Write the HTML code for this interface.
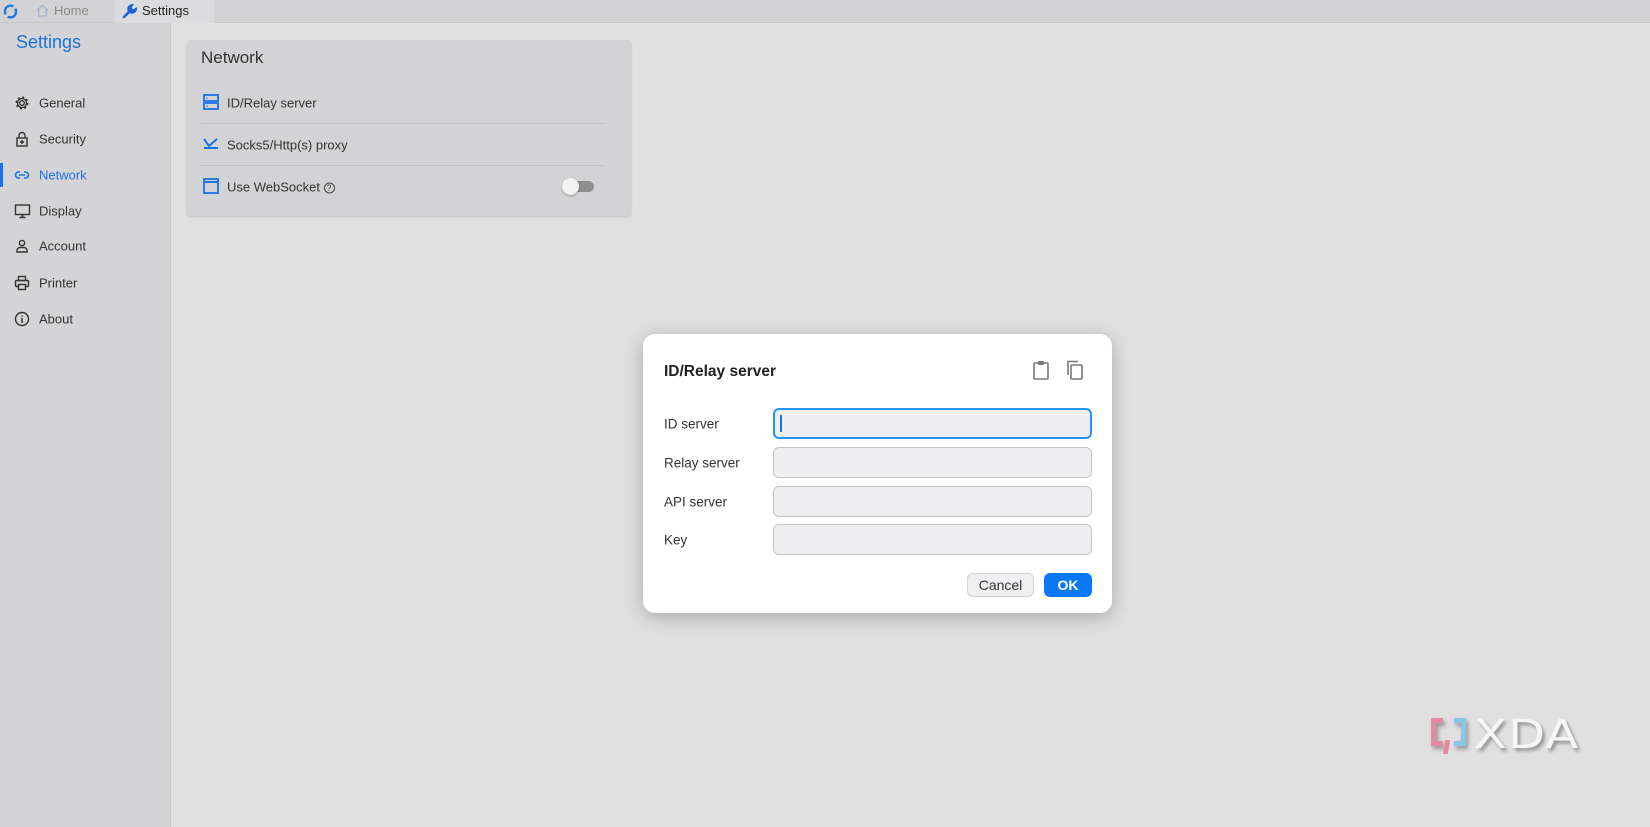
<!DOCTYPE html>
<html><head><meta charset="utf-8"><style>
*{margin:0;padding:0;box-sizing:border-box}
body{width:1650px;height:827px;background:#e0e0e0;font-family:"Liberation Sans",sans-serif;position:relative;overflow:hidden;color:#222}
.abs{position:absolute}
.top{left:0;top:0;width:1650px;height:23px;background:#d3d3d5;border-bottom:1px solid #c8c8c8}
.side{left:0;top:23px;width:171px;height:804px;background:#d4d4d6;border-right:1px solid #c9c9c9}
.item{position:absolute;left:39px;font-size:13px;color:#333;transform:translateY(-50%)}
.ic{position:absolute;left:14px;transform:translateY(-50%)}
.card{left:187px;top:40px;width:444px;height:176px;background:#d3d3d5;border-radius:4px;box-shadow:0 1px 2px rgba(0,0,0,.15)}
.row{position:absolute;left:227px;font-size:13px;color:#333;transform:translateY(-50%)}
.div{position:absolute;left:201px;width:403px;height:1px;background:#c2c2c4}
.dlg{left:643px;top:334px;width:469px;height:279px;background:#fff;border-radius:12px;box-shadow:0 4px 18px rgba(0,0,0,.25)}
.lab{position:absolute;left:664px;font-size:13.5px;color:#333;transform:translateY(-50%)}
.inp{position:absolute;left:773px;width:319px;height:31px;background:#efeff1;border:1px solid #c4c4c6;border-radius:6px}
</style></head><body>
<div class="abs top"></div>
<svg class="abs" style="left:3px;top:4px" width="15" height="15" viewBox="0 0 16 16"><path d="M3 11A6 6 0 0 1 11 2.5M13 5A6 6 0 0 1 5 13.5" stroke="#1a7ee0" stroke-width="2.6" fill="none"/></svg>
<svg class="abs" style="left:36px;top:4px" width="13" height="13" viewBox="0 0 14 14"><path d="M1 7L7 1.5 13 7M3 6v7h8V6" stroke="#9bb4d0" stroke-width="1.3" fill="none"/></svg>
<div class="abs" style="left:54px;top:3px;font-size:13px;color:#888">Home</div>
<div class="abs" style="left:115px;top:0;width:99px;height:23px;background:#dcdcde"></div>
<svg class="abs" style="left:122px;top:3px" width="16" height="16" viewBox="0 0 16 16"><path d="M2 14L9 7M9.5 2.5a3.5 3.5 0 1 0 4 4L11 8 8 5z" stroke="#1565d8" stroke-width="2.6" fill="#1565d8" stroke-linecap="round"/></svg>
<div class="abs" style="left:142px;top:3px;font-size:13px;color:#222">Settings</div>
<div class="abs side"></div>
<div class="abs" style="left:16px;top:32px;font-size:18px;color:#1a73d9">Settings</div>
<div class="abs" style="left:0;top:163px;width:3px;height:24px;background:#1a73e8"></div>
<svg class="ic" style="top:103px" width="16" height="16" viewBox="0 0 16 16"><circle cx="8" cy="8" r="2.3" stroke="#333" stroke-width="1.4" fill="none"/><circle cx="8" cy="8" r="5.3" stroke="#333" stroke-width="2.4" stroke-dasharray="2 2.15" fill="none"/><circle cx="8" cy="8" r="4.5" stroke="#333" stroke-width="1.3" fill="none"/></svg>
<div class="item" style="top:103px">General</div>
<svg class="ic" style="top:139px" width="16" height="16" viewBox="0 0 16 16"><rect x="3" y="7" width="10" height="8" stroke="#333" stroke-width="1.4" fill="none"/><path d="M5 7V4.5a3 3 0 0 1 6 0V7M8 9v4M6 11h4" stroke="#333" stroke-width="1.4" fill="none"/></svg>
<div class="item" style="top:139px">Security</div>
<svg class="ic" style="top:175px" width="16" height="16" viewBox="0 0 16 16"><path d="M6 5H4.5a3 3 0 0 0 0 6H6M10 5h1.5a3 3 0 0 1 0 6H10M5 8h6" stroke="#1a73e8" stroke-width="1.6" fill="none"/></svg>
<div class="item" style="top:175px;color:#1a73e8">Network</div>
<svg class="ic" style="top:211px" width="17" height="16" viewBox="0 0 17 16"><rect x="1.5" y="2" width="14" height="9.5" stroke="#333" stroke-width="1.4" fill="none"/><path d="M8.5 11.5v3M5.5 14.5h6" stroke="#333" stroke-width="1.6"/></svg>
<div class="item" style="top:211px">Display</div>
<svg class="ic" style="top:246px" width="16" height="16" viewBox="0 0 16 16"><circle cx="8" cy="5" r="2.6" stroke="#333" stroke-width="1.4" fill="none"/><path d="M3 14v-1.5a3 3 0 0 1 3-3h4a3 3 0 0 1 3 3V14z" stroke="#333" stroke-width="1.4" fill="none"/></svg>
<div class="item" style="top:246px">Account</div>
<svg class="ic" style="top:283px" width="16" height="16" viewBox="0 0 16 16"><rect x="4.5" y="1.5" width="7" height="4" stroke="#333" stroke-width="1.4" fill="none"/><rect x="1.5" y="5.5" width="13" height="6" rx="1" stroke="#333" stroke-width="1.4" fill="none"/><rect x="4.5" y="9.5" width="7" height="5" stroke="#333" stroke-width="1.4" fill="#d4d4d6"/></svg>
<div class="item" style="top:283px">Printer</div>
<svg class="ic" style="top:319px" width="16" height="16" viewBox="0 0 16 16"><circle cx="8" cy="8" r="6.5" stroke="#333" stroke-width="1.4" fill="none"/><path d="M8 7v5M8 4.5v1.2" stroke="#333" stroke-width="1.5"/></svg>
<div class="item" style="top:319px">About</div>

<div class="abs card"></div>
<div class="abs" style="left:201px;top:48px;font-size:17px;color:#333">Network</div>
<svg class="abs" style="left:203px;top:94px" width="16" height="16" viewBox="0 0 16 16"><rect x="1" y="1" width="14" height="6" stroke="#1a73e8" stroke-width="1.8" fill="none"/><rect x="1" y="9" width="14" height="6" stroke="#1a73e8" stroke-width="1.8" fill="none"/><path d="M3.5 4h1M3.5 12h1" stroke="#1a73e8" stroke-width="1.4"/></svg>
<div class="row" style="top:103px">ID/Relay server</div>
<div class="div" style="top:123px"></div>
<svg class="abs" style="left:203px;top:137px" width="16" height="13" viewBox="0 0 16 13"><path d="M1 2L6 9 14 2M1 11h14" stroke="#1a73e8" stroke-width="2" fill="none"/></svg>
<div class="row" style="top:145px">Socks5/Http(s) proxy</div>
<div class="div" style="top:165px"></div>
<svg class="abs" style="left:203px;top:178px" width="16" height="16" viewBox="0 0 16 16"><rect x="1" y="1" width="14" height="14" stroke="#1a73e8" stroke-width="1.8" fill="none"/><path d="M1 4h14" stroke="#1a73e8" stroke-width="2"/></svg>
<div class="row" style="top:187px">Use WebSocket <span style="border:1px solid #444;border-radius:50%;display:inline-block;width:11px;height:11px;line-height:9px;text-align:center;font-size:8px;vertical-align:1px">?</span></div>
<div class="abs" style="left:566px;top:181px;width:28px;height:11px;border-radius:6px;background:#8f8f8f"></div>
<div class="abs" style="left:562px;top:178px;width:17px;height:17px;border-radius:50%;background:#f2f2f2;box-shadow:0 1px 2px rgba(0,0,0,.3)"></div>

<div class="abs dlg"></div>
<div class="abs" style="left:664px;top:363px;font-size:15.5px;color:#222;font-weight:bold">ID/Relay server</div>
<svg class="abs" style="left:1032px;top:360px" width="18" height="20" viewBox="0 0 18 20"><rect x="2" y="3" width="14" height="16" rx="1" stroke="#777" stroke-width="1.6" fill="none"/><rect x="6" y="1" width="6" height="4" rx="1" fill="#777"/></svg>
<svg class="abs" style="left:1066px;top:360px" width="18" height="20" viewBox="0 0 18 20"><path d="M2 15V1.5h10" stroke="#777" stroke-width="1.6" fill="none"/><rect x="5" y="5" width="11" height="14" rx="1" stroke="#777" stroke-width="1.6" fill="none"/></svg>
<div class="lab" style="top:424px">ID server</div>
<div class="lab" style="top:463px">Relay server</div>
<div class="lab" style="top:502px">API server</div>
<div class="lab" style="top:540px">Key</div>
<div class="inp" style="top:408px;border:2px solid #2196f3"></div>
<div class="abs" style="left:780px;top:415px;width:2px;height:17px;background:#1a73e8"></div>
<div class="inp" style="top:447px"></div>
<div class="inp" style="top:486px"></div>
<div class="inp" style="top:524px"></div>
<div class="abs" style="left:967px;top:573px;width:67px;height:24px;border-radius:6px;background:#f0f0f2;border:1px solid #d6d6d8;font-size:14px;text-align:center;line-height:22px;color:#333">Cancel</div>
<div class="abs" style="left:1044px;top:573px;width:48px;height:24px;border-radius:6px;background:#0a78f5;font-size:14px;font-weight:bold;text-align:center;line-height:24px;color:#fff">OK</div>

<div class="abs" style="left:1431px;top:718px;width:12px;height:28px;border:5px solid #e48ba3;border-right:none;filter:drop-shadow(2px 3px 2px rgba(0,0,0,.35))"></div>
<div class="abs" style="left:1444px;top:740px;width:5px;height:14px;background:#e48ba3;transform:skewX(-10deg)"></div>
<div class="abs" style="left:1454px;top:718px;width:12px;height:28px;border:5px solid #8ac6e8;border-left:none;filter:drop-shadow(2px 3px 2px rgba(0,0,0,.35))"></div>
<div class="abs" style="left:1474px;top:712px;font-size:40px;color:#f6f6f6;letter-spacing:1px;text-shadow:2px 3px 3px rgba(0,0,0,.35);font-family:'DejaVu Sans',sans-serif;transform:scaleX(1.2);transform-origin:left">XDA</div>
</body></html>
